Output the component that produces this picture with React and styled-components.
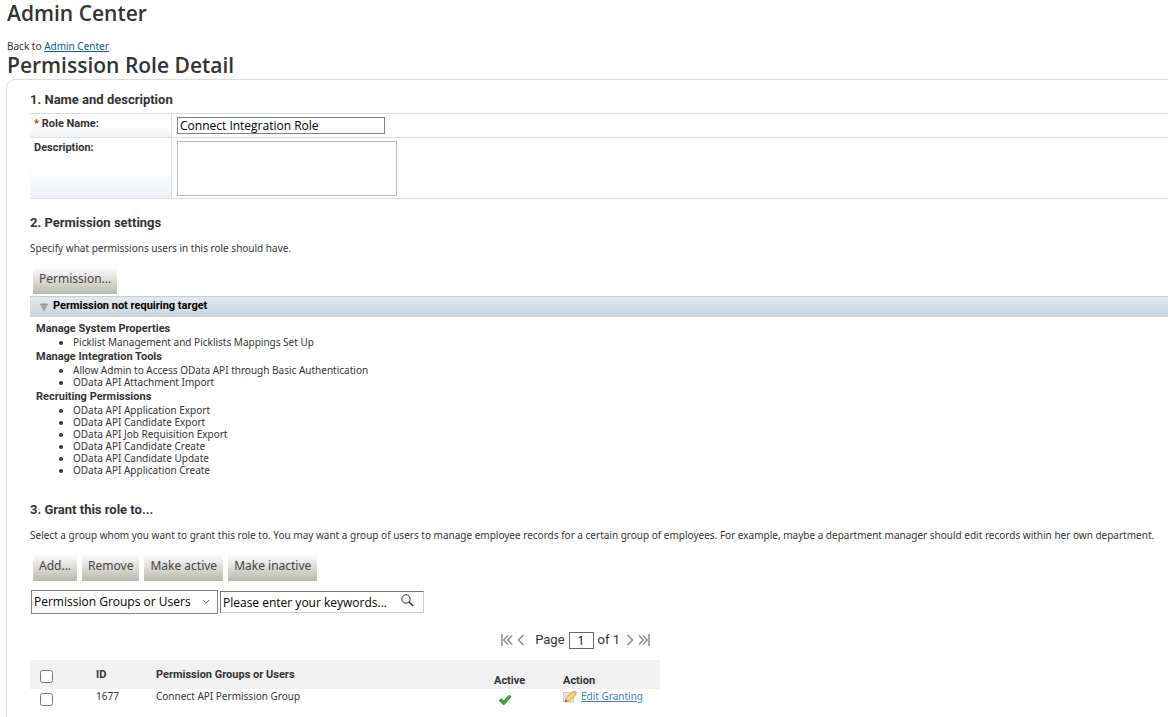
import React from "react";
import styled, { createGlobalStyle } from "styled-components";

const bodyFont = `"Noto Sans", "Open Sans", sans-serif`;
const controlFont = `"Open Sans", "Noto Sans", sans-serif`;
const boldFont = `Roboto, "Liberation Sans", sans-serif`;

const GlobalStyle = createGlobalStyle`
  *, *::before, *::after { box-sizing: border-box; }
  body {
    margin: 0;
    background: #fff;
    color: #333;
    font: 10px/12px ${bodyFont};
  }
  button, input, select, textarea { font: 12px/16px ${controlFont}; }
`;

const Page = styled.div`
  padding-left: 6px;
`;

const Title = styled.h1`
  margin: 0;
  padding-left: 1px;
  font: 600 21px/26px ${controlFont};
`;

const Back = styled.p`
  margin: 14px 0 0;
  padding-left: 1px;
  line-height: 12px;
`;

const Link = styled.a`
  color: ${(p) => p.$color || "#0b5c8f"};
  text-decoration: underline;
`;

const Panel = styled.main`
  margin-top: 1px;
  padding: 12px 0 6px 23px;
  border: solid #ddd;
  border-width: 1px 0 0 1px;
  border-top-left-radius: 9px;
`;

const Section = styled.section`
  padding-bottom: ${(p) => p.$gap || 0}px;
`;

const SectionTitle = styled.h2`
  margin: 0;
  font: bold 13px/16px ${boldFont};
`;

const Hint = styled.p`
  margin: 11px 0 13px;
  line-height: 12px;
`;

const Form = styled.div`
  margin-top: 5px;
  border-top: 1px solid #ddd;
`;

const Field = styled.div`
  display: grid;
  grid-template-columns: 142px 1fr;
  border-bottom: 1px solid #ddd;
`;

const FieldLabel = styled.label`
  padding: 4px;
  border-right: 1px solid #ddd;
  background: linear-gradient(#fff, #fcfdfd 60%, #eef2f6);
  font: bold 11px/12px ${boldFont};
`;

const Required = styled.span`
  color: #d22;
`;

const FieldBody = styled.div`
  display: flex;
  padding: ${(p) => (p.$tall ? "3px 5px 2px" : "3px 5px")};
`;

const RoleInput = styled.input`
  width: 208px;
  height: 17px;
  padding: 0 2px 1px;
  border: 1px solid #7b8290;
`;

const DescriptionInput = styled.textarea`
  width: 220px;
  height: 55px;
  border: 1px solid #b9b9b9;
  resize: none;
`;

const Buttons = styled.div`
  display: flex;
  gap: 5px;
  padding-left: 3px;
`;

const Button = styled.button`
  height: 27px;
  padding: 0 6px 4px;
  border: 0;
  background: linear-gradient(#fff, #bab9ad);
  color: #444;
  font-family: ${bodyFont};
`;

const GroupBar = styled.button`
  display: flex;
  align-items: center;
  gap: 5px;
  width: 100%;
  height: 21px;
  margin: 2px 0 4px;
  padding: 0 10px 3px;
  border: 0;
  border-top: 1px solid #c5ced7;
  background: linear-gradient(#e3e9ef, #c8d4df);
  color: #000;
  font: bold 11px/12px ${boldFont};
  & > svg { margin-top: 3px; }
`;

const PermissionTitle = styled.h3`
  margin: 0;
  padding: 1px 0 0 6px;
  font: bold 11px/14px ${boldFont};
`;

const PermissionList = styled.ul`
  margin: 0;
  padding: 0 0 1px 43px;
  line-height: 12px;
`;

const Filters = styled.div`
  display: flex;
  align-items: center;
  gap: 2px;
  margin-top: 9px;
  padding-left: 1px;
`;

const SelectBox = styled.div`
  display: grid;
  align-items: center;
  width: 187px;
  & > * { grid-area: 1 / 1; }
  & > svg { justify-self: end; margin-right: 8px; pointer-events: none; }
`;

const Select = styled.select`
  appearance: none;
  width: 100%;
  height: 24px;
  padding: 0 2px;
  border: 1px solid #7b8290;
  border-radius: 0;
  background: #fff;
  color: #000;
`;

const Search = styled.form`
  display: flex;
  align-items: center;
  width: 204px;
  height: 22px;
  border: 1px solid #ccc;
  border-top-color: #777;
  border-left-color: #777;
`;

const SearchInput = styled.input`
  flex: 1;
  min-width: 0;
  padding: 1px 2px 0;
  border: 0;
  outline: 0;
  &::placeholder { color: #000; opacity: 1; }
`;

const IconButton = styled.button`
  display: flex;
  padding: 0;
  border: 0;
  background: none;
  margin: ${(p) => p.$margin || 0};
`;

const Results = styled.div`
  width: 630px;
  max-width: 100%;
`;

const Pager = styled.nav`
  display: flex;
  align-items: center;
  justify-content: flex-end;
  gap: 4px;
  margin: 16px 10px 10px 0;
  font: 13px/20px ${boldFont};
`;

const PageLabel = styled.label`
  display: flex;
  align-items: center;
  gap: 4px;
  margin-left: 6px;
`;

const PageInput = styled.input`
  width: 25px;
  height: 17px;
  padding: 0;
  border: 1px solid #666;
  text-align: center;
`;

const Table = styled.table`
  width: 100%;
  border-collapse: collapse;
  table-layout: fixed;
`;

const HeadCell = styled.th`
  height: 29px;
  padding: ${(p) => (p.$low ? "12px 0 0" : 0)};
  background: #f1f1f1;
  font: bold 11px/12px ${boldFont};
  text-align: left;
`;

const Cell = styled.td`
  height: 22px;
  padding: 1px 0 0;
  vertical-align: top;
`;

const Check = styled.input`
  display: block;
  width: 13px;
  height: 13px;
  margin: ${(p) => (p.$head ? "4px" : "3px")} 0 0 10px;
`;

const Status = styled.span`
  display: flex;
  padding: 4px 0 0 4px;
`;

const Action = styled.div`
  display: flex;
  align-items: flex-start;
  gap: 3px;
`;

const permissions = [
  ["Manage System Properties", ["Picklist Management and Picklists Mappings Set Up"]],
  ["Manage Integration Tools", [
    "Allow Admin to Access OData API through Basic Authentication",
    "OData API Attachment Import",
  ]],
  ["Recruiting Permissions", [
    "OData API Application Export",
    "OData API Candidate Export",
    "OData API Job Requisition Export",
    "OData API Candidate Create",
    "OData API Candidate Update",
    "OData API Application Create",
  ]],
];

const PagerIcon = ({ d, width }) => (
  <svg width={width} height="12" viewBox={`0 0 ${width} 12`} fill="none" stroke="#8c8c8c" strokeWidth="1.5">
    <path d={d} />
  </svg>
);

const TickIcon = () => (
  <svg width="14" height="12" viewBox="0 0 14 12" role="img" aria-label="Active">
    <path d="M1 6.6 3.400 4.700 5.600 7 11.300 1 13 2.700 5.800 11Z" fill="#2faa2f" stroke="#168716" strokeWidth=".7" />
  </svg>
);

const EditIcon = () => (
  <svg width="15" height="14" viewBox="0 0 15 14">
    <path d="M.5 2.500h10v9.500h-10z" fill="#eee" stroke="#cfcfcf" />
    <path d="M2 5h5M2 7h3M2 9h2" stroke="#c4c4c4" />
    <path d="M2 11.800 3.200 7.800 9.900 1.300 13.200 4.400 6.300 11Z" fill="#f9d36c" stroke="#d39a35" strokeWidth=".8" />
    <path d="M9.500 1.800 10.800.7q.9-.6 1.700.2l1.200 1.100q.6.8 0 1.500l-1.100 1.200Z" fill="#eab095" />
    <path d="M2 11.800 2.700 9.400 4.500 11.200Z" fill="#554" />
  </svg>
);

export default function App() {
  return (
    <>
      <GlobalStyle />
      <Page>
        <Title>Admin Center</Title>
        <Back>
          Back to <Link href="#admin">Admin Center</Link>
        </Back>
        <Title>Permission Role Detail</Title>
        <Panel>
          <Section $gap={16}>
            <SectionTitle>1. Name and description</SectionTitle>
            <Form>
              <Field>
                <FieldLabel htmlFor="role">
                  <Required>*</Required> Role Name:
                </FieldLabel>
                <FieldBody>
                  <RoleInput id="role" defaultValue="Connect Integration Role" />
                </FieldBody>
              </Field>
              <Field>
                <FieldLabel htmlFor="description">Description:</FieldLabel>
                <FieldBody $tall>
                  <DescriptionInput id="description" />
                </FieldBody>
              </Field>
            </Form>
          </Section>

          <Section $gap={25}>
            <SectionTitle>2. Permission settings</SectionTitle>
            <Hint>Specify what permissions users in this role should have.</Hint>
            <Buttons>
              <Button type="button">Permission...</Button>
            </Buttons>
            <GroupBar type="button" aria-expanded="true">
              <svg width="8" height="8" viewBox="0 0 8 8">
                <path d="M.5 1h7L4 7.500Z" fill="#aaa" stroke="#888" strokeWidth=".8" />
              </svg>
              Permission not requiring target
            </GroupBar>
            {permissions.map(([title, items]) => (
              <React.Fragment key={title}>
                <PermissionTitle>{title}</PermissionTitle>
                <PermissionList>
                  {items.map((item) => (
                    <li key={item}>{item}</li>
                  ))}
                </PermissionList>
              </React.Fragment>
            ))}
          </Section>

          <Section>
            <SectionTitle>3. Grant this role to...</SectionTitle>
            <Hint>
              Select a group whom you want to grant this role to. You may want a group of users to manage
              employee records for a certain group of employees. For example, maybe a department manager
              should edit records within her own department.
            </Hint>
            <Buttons>
              <Button type="button">Add...</Button>
              <Button type="button">Remove</Button>
              <Button type="button">Make active</Button>
              <Button type="button">Make inactive</Button>
            </Buttons>
            <Filters>
              <SelectBox>
                <Select aria-label="Search in">
                  <option>Permission Groups or Users</option>
                </Select>
                <svg width="8" height="6" viewBox="0 0 8 6" fill="none" stroke="#7d3c55">
                  <path d="M.8 1 4 4.200 7.200 1" />
                </svg>
              </SelectBox>
              <Search onSubmit={(e) => e.preventDefault()}>
                <SearchInput aria-label="Keywords" placeholder="Please enter your keywords..." />
                <IconButton aria-label="Search" $margin="0 9px 3px 0">
                  <svg width="13" height="13" viewBox="0 0 13 13" fill="none" stroke="#333">
                    <circle cx="5" cy="5" r="4.200" />
                    <path d="M8 8 12.300 12" strokeWidth="1.6" />
                  </svg>
                </IconButton>
              </Search>
            </Filters>
            <Results>
              <Pager aria-label="Pages">
                <IconButton type="button" aria-label="First page">
                  <PagerIcon width={12} d="M1 0v12M7 1.500 2.800 6 7 10.500M11 1.500 6.800 6 11 10.500" />
                </IconButton>
                <IconButton type="button" aria-label="Previous page">
                  <PagerIcon width={8} d="M6.500 1 1.500 6l5 5" />
                </IconButton>
                <PageLabel>
                  Page <PageInput defaultValue="1" /> of 1
                </PageLabel>
                <IconButton type="button" aria-label="Next page" $margin="0 0 0 2px">
                  <PagerIcon width={8} d="M1.500 1l5 5-5 5" />
                </IconButton>
                <IconButton type="button" aria-label="Last page">
                  <PagerIcon width={12} d="M11 0v12M1 1.500 5.200 6 1 10.500M5 1.500 9.200 6 5 10.500" />
                </IconButton>
              </Pager>
              <Table>
                <colgroup>
                  <col width="66" />
                  <col width="60" />
                  <col width="338" />
                  <col width="69" />
                  <col />
                </colgroup>
                <thead>
                  <tr>
                    <HeadCell scope="col"><Check $head type="checkbox" aria-label="Select all" /></HeadCell>
                    <HeadCell scope="col">ID</HeadCell>
                    <HeadCell scope="col">Permission Groups or Users</HeadCell>
                    <HeadCell scope="col" $low>Active</HeadCell>
                    <HeadCell scope="col" $low>Action</HeadCell>
                  </tr>
                </thead>
                <tbody>
                  <tr>
                    <Cell><Check type="checkbox" aria-label="Select 1677" /></Cell>
                    <Cell>1677</Cell>
                    <Cell>Connect API Permission Group</Cell>
                    <Cell><Status><TickIcon /></Status></Cell>
                    <Cell>
                      <Action>
                        <EditIcon />
                        <Link href="#edit" $color="#3b82c4">Edit Granting</Link>
                      </Action>
                    </Cell>
                  </tr>
                </tbody>
              </Table>
            </Results>
          </Section>
        </Panel>
      </Page>
    </>
  );
}
